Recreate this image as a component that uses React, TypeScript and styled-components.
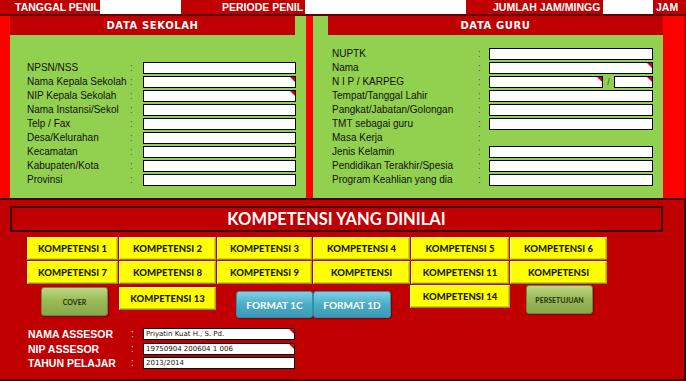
import React from "react";
import styled, { createGlobalStyle, css } from "styled-components";

const GlobalStyle = createGlobalStyle`
  html, body {
    margin: 0;
    padding: 0;
    background: #c00000;
  }
  * {
    box-sizing: border-box;
  }
`;

const Page = styled.div`
  width: 686px;
  height: 381px;
  display: flex;
  flex-direction: column;
  overflow: hidden;
  font-family: "Liberation Sans", Arial, sans-serif;
`;

const TopBar = styled.div`
  display: grid;
  grid-template-columns: 100px 81px 124px 161px 137px 50px 1fr;
  height: 16px;
  background: #c00000;
  border-bottom: 2px solid #5c0000;
`;

const TopLabel = styled.div<{ $pad: number }>`
  padding-left: ${({ $pad }) => $pad}px;
  color: #fff;
  font-weight: bold;
  font-size: 10.5px;
  line-height: 14px;
  white-space: nowrap;
`;

const TopCell = styled.div`
  background: #fff;
`;

const Upper = styled.div`
  display: flex;
  gap: 7px;
  height: 184px;
  padding-left: 10px;
  background: #ff0000;
  border-right: 2px solid #c00000;
  border-bottom: 2px solid #3c0000;
`;

const Panel = styled.div<{ $width: number }>`
  width: ${({ $width }) => $width}px;
  background: #92d050;
  display: flex;
  flex-direction: column;
`;

const PanelHeader = styled.div<{ $side: "left" | "right"; $gap: number }>`
  height: 19px;
  background: #c00000;
  color: #fff;
  font-family: "DejaVu Sans", sans-serif;
  font-weight: bold;
  font-size: 10px;
  letter-spacing: 0.6px;
  line-height: 19px;
  text-align: center;
  ${({ $side, $gap }) =>
    $side === "left"
      ? css`margin-right: ${$gap}px;`
      : css`margin-left: ${$gap}px;`}
`;

const FieldList = styled.div<{ $top: number; $left: number }>`
  display: flex;
  flex-direction: column;
  gap: 2px;
  margin-top: ${({ $top }) => $top}px;
  padding-left: ${({ $left }) => $left}px;
`;

const FieldRow = styled.div`
  display: flex;
  align-items: center;
  height: 12px;
`;

const FieldLabel = styled.div<{ $width: number }>`
  width: ${({ $width }) => $width}px;
  font-size: 10px;
  line-height: 12px;
  color: #111;
  white-space: nowrap;
`;

const Colon = styled.div<{ $width: number; $pad?: number; $color?: string }>`
  width: ${({ $width }) => $width}px;
  padding-left: ${({ $pad }) => $pad ?? 0}px;
  font-size: 10px;
  line-height: 12px;
  color: ${({ $color }) => $color ?? "#555"};
`;

const InputBox = styled.div<{ $width: number; $flag?: boolean }>`
  position: relative;
  width: ${({ $width }) => $width}px;
  height: 12px;
  background: #fff;
  border: 1px solid #000;
  font-family: "DejaVu Sans", sans-serif;
  font-size: 7px;
  line-height: 10px;
  padding-left: 2px;
  color: #111;
  white-space: nowrap;
  ${({ $flag }) =>
    $flag &&
    css`
      &::after {
        content: "";
        position: absolute;
        top: 0;
        right: 0;
        border-top: 5px solid #e00000;
        border-left: 5px solid transparent;
      }
    `}
`;

const Slash = styled.div`
  width: 11px;
  text-align: center;
  font-size: 9px;
  color: #444;
`;

const Lower = styled.div`
  flex: 1;
  background: #c00000;
  padding: 6px 0 0 10px;
  border-right: 2px solid #400000;
  border-bottom: 2px solid #400000;
`;

const TitleBox = styled.div`
  width: 653px;
  height: 26px;
  border: 2px solid #3a0000;
  color: #fff;
  font-family: Lato, "Liberation Sans", sans-serif;
  font-weight: bold;
  font-size: 16.5px;
  line-height: 22px;
  text-align: center;
`;

const CompGrid = styled.div`
  display: grid;
  grid-template-columns: 92px 98px 96px 98px 99px 98px;
  grid-template-rows: 24px 24px;
  margin: 5px 0 0 17px;
`;

const Bevel = css`
  border: 1px solid;
  border-color: #ffff9a #a8a800 #8c8c00 #ffffb0;
  background: #ffff00;
  box-shadow: inset -1px -1px 0 #d4d400;
  color: #1a1a00;
  font-family: Lato, "Liberation Sans", sans-serif;
  font-weight: 900;
  font-size: 9.5px;
  display: flex;
  align-items: center;
  justify-content: center;
  white-space: nowrap;
`;

const CompButton = styled.div`
  ${Bevel}
  width: calc(100% - 1px);
  height: 23px;
`;

const ActionRow = styled.div`
  display: flex;
  align-items: flex-start;
  height: 33px;
  padding-left: 17px;
`;

const Placed = styled.div<{ $left: number; $top: number; $width: number; $height: number }>`
  margin-left: ${({ $left }) => $left}px;
  margin-top: ${({ $top }) => $top}px;
  width: ${({ $width }) => $width}px;
  height: ${({ $height }) => $height}px;
  flex: none;
`;

const ActionComp = styled(Placed)`
  ${Bevel}
`;

const OliveButton = styled(Placed)`
  border-radius: 3px;
  border: 1px solid #6b8a2f;
  background: linear-gradient(#bcd884, #9bbb59 45%, #88a84a);
  box-shadow: 1px 1px 1px rgba(0, 0, 0, 0.35);
  color: #24300c;
  font-family: Lato, "Liberation Sans", sans-serif;
  font-weight: bold;
  font-size: 7px;
  display: flex;
  align-items: center;
  justify-content: center;
`;

const BlueButton = styled(Placed)`
  border-radius: 3px;
  border: 1px solid #2f8fa8;
  background: linear-gradient(#7fd0e8, #4bacc6 50%, #3c9ab4);
  box-shadow: 1px 1px 1px rgba(0, 0, 0, 0.35);
  color: #fff;
  font-family: Lato, "Liberation Sans", sans-serif;
  font-weight: bold;
  font-size: 10px;
  display: flex;
  align-items: center;
  justify-content: center;
`;

const AssessorList = styled.div`
  display: flex;
  flex-direction: column;
  gap: 2.5px;
  margin-top: 10px;
  padding-left: 18px;
`;

const AssessorLabel = styled.div`
  width: 103px;
  color: #fff;
  font-weight: bold;
  font-size: 10.5px;
  line-height: 12px;
  white-space: nowrap;
`;

const sekolahFields = [
  { label: "NPSN/NSS" },
  { label: "Nama Kepala Sekolah", flag: true },
  { label: "NIP Kepala Sekolah", flag: true },
  { label: "Nama Instansi/Sekol" },
  { label: "Telp / Fax" },
  { label: "Desa/Kelurahan" },
  { label: "Kecamatan" },
  { label: "Kabupaten/Kota" },
  { label: "Provinsi" },
];

type GuruField = { label: string; kind: "input" | "flag" | "nip" | "none" };

const guruFields: GuruField[] = [
  { label: "NUPTK", kind: "input" },
  { label: "Nama", kind: "flag" },
  { label: "N I P / KARPEG", kind: "nip" },
  { label: "Tempat/Tanggal Lahir", kind: "input" },
  { label: "Pangkat/Jabatan/Golongan", kind: "input" },
  { label: "TMT sebagai guru", kind: "input" },
  { label: "Masa Kerja", kind: "none" },
  { label: "Jenis Kelamin", kind: "input" },
  { label: "Pendidikan Terakhir/Spesia", kind: "input" },
  { label: "Program Keahlian yang dia", kind: "input" },
];

const kompetensiRows = [
  ["KOMPETENSI 1", "KOMPETENSI 2", "KOMPETENSI 3", "KOMPETENSI 4", "KOMPETENSI 5", "KOMPETENSI 6"],
  ["KOMPETENSI 7", "KOMPETENSI 8", "KOMPETENSI 9", "KOMPETENSI", "KOMPETENSI 11", "KOMPETENSI"],
];

const assessor = [
  { label: "NAMA ASSESOR", value: "Priyatin Kuat H., S. Pd.", flag: true },
  { label: "NIP ASSESOR", value: "19750904 200604 1 006", flag: true },
  { label: "TAHUN PELAJAR", value: "2013/2014" },
];

const App = () => {
  return (
    <>
      <GlobalStyle />
      <Page>
        <TopBar>
          <TopLabel $pad={15}>TANGGAL PENIL</TopLabel>
          <TopCell />
          <TopLabel $pad={41}>PERIODE PENIL</TopLabel>
          <TopCell />
          <TopLabel $pad={27}>JUMLAH JAM/MINGG</TopLabel>
          <TopCell />
          <TopLabel $pad={3}>JAM</TopLabel>
        </TopBar>

        <Upper>
          <Panel $width={296}>
            <PanelHeader $side="left" $gap={11}>
              DATA SEKOLAH
            </PanelHeader>
            <FieldList $top={27} $left={17}>
              {sekolahFields.map((f) => (
                <FieldRow key={f.label}>
                  <FieldLabel $width={103}>{f.label}</FieldLabel>
                  <Colon $width={13}>:</Colon>
                  <InputBox $width={153} $flag={f.flag} />
                </FieldRow>
              ))}
            </FieldList>
          </Panel>

          <Panel $width={350}>
            <PanelHeader $side="right" $gap={15}>
              DATA GURU
            </PanelHeader>
            <FieldList $top={13} $left={19}>
              {guruFields.map((f) => (
                <FieldRow key={f.label}>
                  <FieldLabel $width={133}>{f.label}</FieldLabel>
                  <Colon $width={24} $pad={13}>
                    :
                  </Colon>
                  {f.kind === "input" && <InputBox $width={164} />}
                  {f.kind === "flag" && <InputBox $width={164} $flag />}
                  {f.kind === "nip" && (
                    <>
                      <InputBox $width={114} $flag />
                      <Slash>/</Slash>
                      <InputBox $width={39} $flag />
                    </>
                  )}
                </FieldRow>
              ))}
            </FieldList>
          </Panel>
        </Upper>

        <Lower>
          <TitleBox>KOMPETENSI YANG DINILAI</TitleBox>
          <CompGrid>
            {kompetensiRows.flat().map((k, i) => (
              <CompButton key={i}>{k}</CompButton>
            ))}
          </CompGrid>
          <ActionRow>
            <OliveButton $left={14} $top={2} $width={67} $height={29}>
              COVER
            </OliveButton>
            <ActionComp $left={11} $top={2} $width={97} $height={23}>
              KOMPETENSI 13
            </ActionComp>
            <BlueButton $left={20} $top={6} $width={77} $height={27}>
              FORMAT 1C
            </BlueButton>
            <BlueButton $left={0} $top={6} $width={78} $height={27}>
              FORMAT 1D
            </BlueButton>
            <ActionComp $left={19} $top={0} $width={100} $height={23}>
              KOMPETENSI 14
            </ActionComp>
            <OliveButton $left={16} $top={0} $width={67} $height={29}>
              PERSETUJUAN
            </OliveButton>
          </ActionRow>
          <AssessorList>
            {assessor.map((a) => (
              <FieldRow key={a.label}>
                <AssessorLabel>{a.label}</AssessorLabel>
                <Colon $width={12} $color="#ffd0d0">
                  :
                </Colon>
                <InputBox $width={152} $flag={a.flag}>
                  {a.value}
                </InputBox>
              </FieldRow>
            ))}
          </AssessorList>
        </Lower>
      </Page>
    </>
  );
};

export default App;
